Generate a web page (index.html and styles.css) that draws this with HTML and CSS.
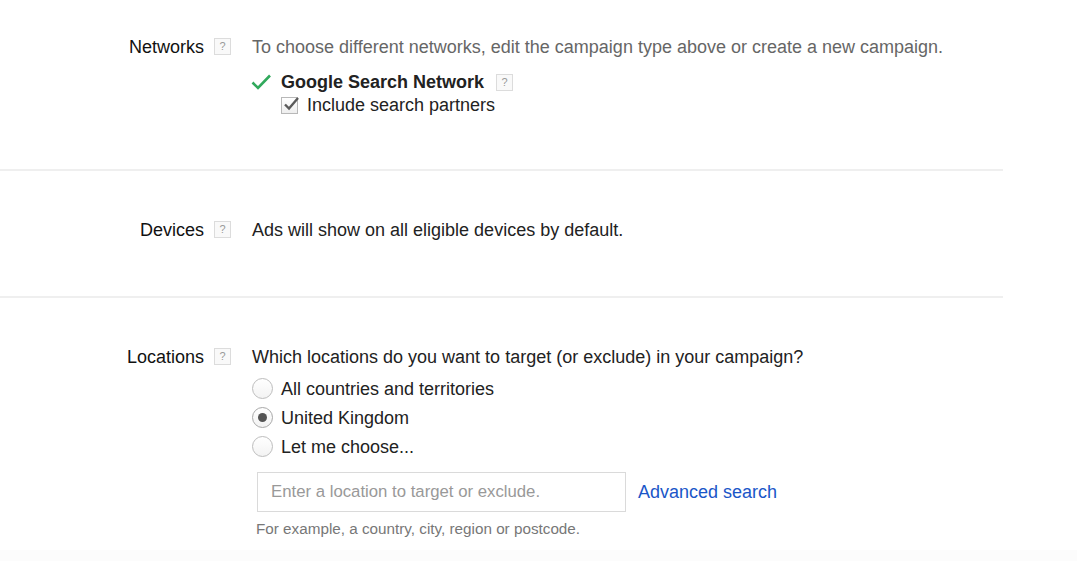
FILE: index.html
```html
<!DOCTYPE html>
<html lang="en">
  <head>
    <meta charset="UTF-8" />
    <meta name="viewport" content="width=device-width, initial-scale=1.0" />
    <title>Campaign settings</title>
    <link rel="stylesheet" href="styles.css">
  </head>
  <body>
    <div class="settings">
      <section class="row row-first">
        <div class="label">Networks</div>
        <div class="help-cell"><span class="help">?</span></div>
        <div class="content">
          <p class="note">To choose different networks, edit the campaign type above or create a new campaign.</p>
          <div class="network">
            <svg class="tick" width="20" height="16" viewBox="0 0 20 16">
              <polyline points="1.5,8.5 7,14 19,1.5" fill="none" stroke="#31a95c" stroke-width="2.6" />
            </svg>
            <strong>Google Search Network</strong>
            <span class="help">?</span>
          </div>
          <label class="check">
            <span class="box">
              <svg width="18" height="18" viewBox="0 0 18 18">
                <polyline points="3,8.5 7,12.5 16,2" fill="none" stroke="#5a5a5a" stroke-width="2.4" />
              </svg>
            </span>
            Include search partners
          </label>
        </div>
      </section>

      <section class="row">
        <div class="label">Devices</div>
        <div class="help-cell"><span class="help">?</span></div>
        <div class="content">
          <p>Ads will show on all eligible devices by default.</p>
        </div>
      </section>

      <section class="row row-last">
        <div class="label">Locations</div>
        <div class="help-cell"><span class="help">?</span></div>
        <div class="content">
          <p>Which locations do you want to target (or exclude) in your campaign?</p>
          <div class="radios">
            <label class="radio"><span class="dot"></span>All countries and territories</label>
            <label class="radio"><span class="dot selected"></span>United Kingdom</label>
            <label class="radio"><span class="dot"></span>Let me choose...</label>
          </div>
          <div class="search">
            <input type="text" placeholder="Enter a location to target or exclude." />
            <a href="#">Advanced search</a>
          </div>
          <p class="hint">For example, a country, city, region or postcode.</p>
        </div>
      </section>
    </div>
    <div class="footer"></div>
  </body>
</html>
```

FILE: styles.css
```css
body {
  margin: 0;
  padding: 0;
  overflow: hidden;
  font-family: "Liberation Sans", Arial, sans-serif;
  font-size: 18px;
  color: #222;
  background: #fff;
}

p {
  margin: 0;
}

.settings {
  width: 1003px;
}

.row {
  display: grid;
  grid-template-columns: 204px 48px 1fr;
  padding: 48px 0 53px;
  border-bottom: 2px solid #efefef;
  line-height: 22px;
}
.row-first {
  padding-top: 36px;
}
.row-last {
  border-bottom: none;
  padding-bottom: 12px;
}

.label {
  text-align: right;
  color: #111;
}

.help-cell {
  padding-left: 10px;
  padding-top: 2px;
}

.help {
  display: inline-block;
  width: 15px;
  height: 15px;
  border: 1px solid #dcdcdc;
  background: #f9f9f9;
  color: #999;
  font-size: 11px;
  line-height: 15px;
  text-align: center;
  vertical-align: top;
}

.note {
  color: #666;
}

.network {
  display: flex;
  align-items: center;
  margin-top: 13px;
  color: #222;
}
.network .tick {
  margin-left: -1px;
  margin-right: 10px;
}
.network .help {
  margin-left: 12px;
}

.check {
  display: flex;
  align-items: center;
  margin-left: 29px;
  margin-top: 1px;
}
.check .box {
  position: relative;
  width: 15px;
  height: 15px;
  border: 1px solid #b8b8b8;
  background: linear-gradient(#fff, #eee);
  margin-right: 9px;
}
.check .box svg {
  position: absolute;
  left: 0;
  top: -2px;
}

.radios {
  margin-top: 6px;
}
.radio {
  display: flex;
  align-items: center;
  height: 29px;
}
.dot {
  position: relative;
  box-sizing: border-box;
  width: 21px;
  height: 21px;
  border: 1px solid #bdbdbd;
  border-radius: 50%;
  background: linear-gradient(#fff, #f3f3f3);
  margin-right: 8px;
}
.dot.selected {
  border-color: #a8a8a8;
}
.dot.selected::after {
  content: "";
  position: absolute;
  left: 5px;
  top: 5px;
  width: 9px;
  height: 9px;
  border-radius: 50%;
  background: #555;
}

.search {
  display: flex;
  align-items: center;
  margin: 11px 0 0 5px;
}
.search input {
  box-sizing: border-box;
  width: 369px;
  height: 40px;
  border: 1px solid #dadada;
  padding: 0 13px;
  font-family: inherit;
  font-size: 16.75px;
  color: #222;
}
.search input::placeholder {
  color: #999;
}
.search a {
  margin-left: 12px;
  color: #1a56c8;
  text-decoration: none;
  font-size: 18px;
}

.hint {
  margin: 8px 0 0 4px;
  font-size: 15.25px;
  line-height: 18px;
  color: #777;
}

.footer {
  height: 20px;
  background: #fcfcfc;
}
```
